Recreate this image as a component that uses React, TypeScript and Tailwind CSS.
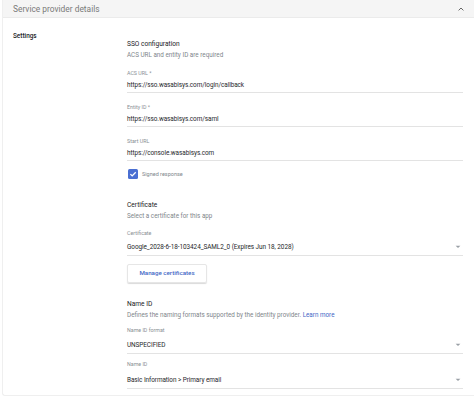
import React from "react";

const font = { fontFamily: "Roboto, 'Noto Sans', Arial, sans-serif" };

function Field({
  label,
  value,
  mt,
  gap,
  pb,
  select,
}: {
  label: string;
  value: string;
  mt: string;
  gap: string;
  pb: string;
  select?: boolean;
}) {
  return (
    <div className={mt}>
      <div className="h-[8px] leading-[8px] text-[5.3px] text-[#8a8f94]">{label}</div>
      <div className={`${gap} ${pb} flex items-center justify-between border-b border-[#e3e3e3]`}>
        <div className="h-[10px] leading-[10px] text-[6.4px] tracking-[-0.06px] text-[#26282b]">{value}</div>
        {select && (
          <svg width="6" height="4" viewBox="0 0 6 4" className="mr-[2px]">
            <path d="M0.6 0.8 L3 3.1 L5.4 0.8 Z" fill="#9aa0a6" />
          </svg>
        )}
      </div>
    </div>
  );
}

export default function App() {
  return (
    <div className="w-[474px] h-[398px] bg-white overflow-hidden" style={font}>
      <div className="ml-[2px] h-[396px] border-l border-b border-[#efefef] rounded-bl-[3px]">
        <div className="h-[18px] bg-[#f5f5f5] border-b border-[#ebebeb] flex items-center justify-between pl-[10px] pr-[10px]">
          <span className="text-[8.4px] text-[#7a7a7a] leading-[10px]">Service provider details</span>
          <svg width="6" height="4" viewBox="0 0 6 4">
            <path d="M0.6 3.4 L3 1 L5.4 3.4" stroke="#666666" strokeWidth="1" fill="none" />
          </svg>
        </div>
        <div className="flex">
          <div className="w-[124px] pl-[10px] pt-[13px]">
            <div className="h-[10px] leading-[10px] text-[6.4px] font-medium text-[#202124]">Settings</div>
          </div>
          <div className="flex-1 pr-[11px]">
            <div className="mt-[21px] h-[10px] leading-[10px] text-[6.6px] text-[#202124]">SSO configuration</div>
            <div className="mt-[1px] h-[10px] leading-[10px] text-[6.3px] text-[#80868b]">ACS URL and entity ID are required</div>
            <Field mt="mt-[9px]" gap="mt-[3px]" pb="pb-[2px]" label="ACS URL *" value="https://sso.wasabisys.com/login/callback" />
            <Field mt="mt-[10px]" gap="mt-[3px]" pb="pb-[2px]" label="Entity ID *" value="https://sso.wasabisys.com/saml" />
            <Field mt="mt-[10px]" gap="mt-[3px]" pb="pb-[2px]" label="Start URL" value="https://console.wasabisys.com" />
            <div className="mt-[8px] h-[10px] flex items-center">
              <div className="w-[10px] h-[10px] rounded-[1.5px] bg-[#4a6fd2] flex items-center justify-center ml-[1px]">
                <svg width="8" height="8" viewBox="0 0 8 8">
                  <path d="M1.4 4.1 L3.2 5.9 L6.7 2.2" stroke="white" strokeWidth="1.3" fill="none" />
                </svg>
              </div>
              <span className="ml-[4px] text-[5.5px] text-[#80868b]">Signed response</span>
            </div>
            <div className="mt-[21px] h-[10px] leading-[10px] text-[6.6px] text-[#202124]">Certificate</div>
            <div className="mt-[1px] h-[10px] leading-[10px] text-[6.3px] text-[#80868b]">Select a certificate for this app</div>
            <Field
              mt="mt-[8px]"
              gap="mt-[5px]"
              pb="pb-[3px]"
              label="Certificate"
              value="Google_2028-6-18-103424_SAML2_0 (Expires Jun 18, 2028)"
              select
            />
            <div className="mt-[8px] w-[80px] h-[19px] rounded-[2px] border border-[#e6e6e6] shadow-[0_1px_1px_rgba(0,0,0,0.15)] flex items-center justify-center text-[6.2px] font-medium text-[#3f67c6]">
              Manage certificates
            </div>
            <div className="mt-[16px] h-[10px] leading-[10px] text-[6.6px] text-[#202124]">Name ID</div>
            <div className="mt-[1px] h-[10px] leading-[10px] text-[6.3px] text-[#80868b]">
              Defines the naming formats supported by the identity provider.{" "}
              <span className="text-[#3f67c6]">Learn more</span>
            </div>
            <Field mt="mt-[6px]" gap="mt-[6px]" pb="pb-[3px]" label="Name ID format" value="UNSPECIFIED" select />
            <Field
              mt="mt-[6px]"
              gap="mt-[7px]"
              pb="pb-[3px]"
              label="Name ID"
              value="Basic Information > Primary email"
              select
            />
          </div>
        </div>
      </div>
    </div>
  );
}
